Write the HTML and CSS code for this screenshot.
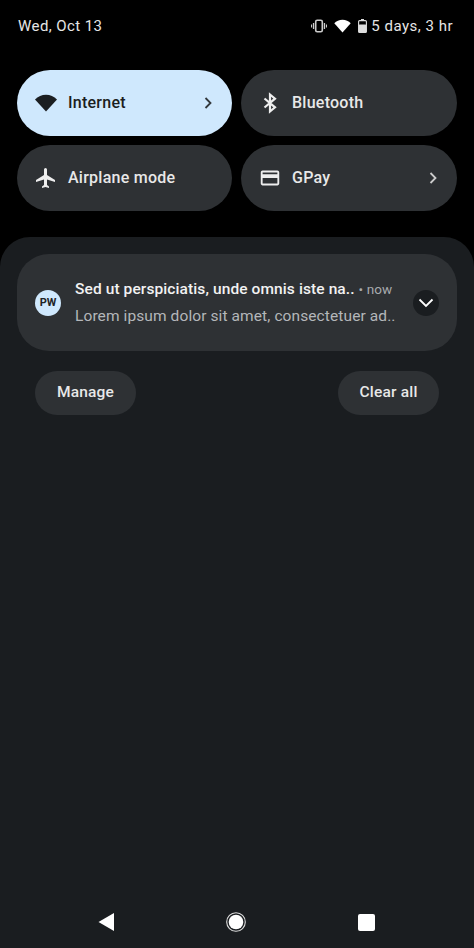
FILE: index.html
```html
<!DOCTYPE html>
<html lang="en">
<head>
    <meta charset="UTF-8">
    <meta name="viewport" content="width=device-width, initial-scale=1.0">
    <title>Notification shade</title>
    <link rel="stylesheet" href="styles.css">
</head>
<body>

    <div class="status-bar">
        <span class="status-date">Wed, Oct 13</span>
        <div class="status-right">
            <svg class="icon-vibrate" viewBox="0 0 16 14" width="16" height="14">
                <rect x="4.7" y="1.2" width="6.6" height="11.6" rx="1.5" fill="none" stroke="#ccc" stroke-width="1.6"/>
                <rect x="1.9" y="4" width="1.3" height="6" fill="#ccc"/>
                <rect x="12.8" y="4" width="1.3" height="6" fill="#ccc"/>
                <rect x="0" y="5.5" width="1.1" height="3" fill="#ccc"/>
                <rect x="14.9" y="5.5" width="1.1" height="3" fill="#ccc"/>
            </svg>
            <svg class="icon-wifi-small" viewBox="0 0 18 14" width="17" height="14">
                <path d="M9 14 L0.3 4 C2.5 1.7 5.5 0.3 9 0.3 C12.5 0.3 15.5 1.7 17.7 4 Z" fill="#fff"/>
            </svg>
            <svg class="icon-battery" viewBox="0 0 9 14" width="9" height="14">
                <rect x="3" y="0" width="3" height="2" fill="#ddd"/>
                <rect x="0.6" y="1.6" width="7.8" height="11.8" rx="1" fill="none" stroke="#ddd" stroke-width="1.1"/>
                <rect x="0.6" y="5.5" width="7.8" height="8" rx="1" fill="#ddd"/>
            </svg>
            <span class="status-text">5 days, 3 hr</span>
        </div>
    </div>

    <div class="tiles">
        <div class="tile active">
            <svg class="tile-icon" viewBox="0 0 24 24" width="24" height="24">
                <path d="M12 20.5 L1 8.5 C4 5.5 7.8 3.8 12 3.8 C16.2 3.8 20 5.5 23 8.5 Z" fill="#1b1e21"/>
            </svg>
            <span class="tile-label">Internet</span>
            <svg class="tile-chevron" viewBox="0 0 10 14" width="10" height="14">
                <path d="M2.5 2 L7.5 7 L2.5 12" fill="none" stroke="#33383c" stroke-width="1.8"/>
            </svg>
        </div>
        <div class="tile">
            <svg class="tile-icon" viewBox="0 0 24 24" width="24" height="24">
                <path d="M6.5 7.5 L17 16.3 L12 20.5 V3.5 L17 7.7 L6.5 16.5" fill="none" stroke="#eee" stroke-width="2.2"/>
            </svg>
            <span class="tile-label">Bluetooth</span>
        </div>
        <div class="tile">
            <svg class="tile-icon" viewBox="0 0 24 24" width="24" height="24">
                <path d="M21 16v-2l-8-5V3.5a1.5 1.5 0 0 0-3 0V9l-8 5v2l8-2.5V19l-2 1.5V22l3.5-1 3.5 1v-1.5L13 19v-5.5z" fill="#eee"/>
            </svg>
            <span class="tile-label">Airplane mode</span>
        </div>
        <div class="tile">
            <svg class="tile-icon" viewBox="-1 -1 26 26" width="24" height="24">
                <path d="M20 4H4c-1.1 0-2 .9-2 2v12c0 1.1.9 2 2 2h16c1.1 0 2-.9 2-2V6c0-1.1-.9-2-2-2zm0 14H4v-6h16v6zm0-10H4V6h16v2z" fill="#eee"/>
            </svg>
            <span class="tile-label">GPay</span>
            <svg class="tile-chevron" viewBox="0 0 10 14" width="10" height="14">
                <path d="M2.5 2 L7.5 7 L2.5 12" fill="none" stroke="#ccc" stroke-width="1.8"/>
            </svg>
        </div>
    </div>

    <div class="shade">
        <div class="notification">
            <div class="avatar">PW</div>
            <div class="notification-text">
                <div class="notification-title">
                    <strong>Sed ut perspiciatis, unde omnis iste na..</strong>
                    <span class="notification-time">• now</span>
                </div>
                <div class="notification-body">Lorem ipsum dolor sit amet, consectetuer ad..</div>
            </div>
            <div class="expand">
                <svg viewBox="0 0 16 10" width="16" height="10">
                    <path d="M1.5 1.5 L8 8 L14.5 1.5" fill="none" stroke="#fff" stroke-width="1.8"/>
                </svg>
            </div>
        </div>

        <div class="shade-actions">
            <button class="pill">Manage</button>
            <button class="pill">Clear all</button>
        </div>

        <div class="nav-bar">
            <svg viewBox="0 0 16 18" width="16" height="18">
                <path d="M16 0 V18 L0.5 9 Z" fill="#fff"/>
            </svg>
            <svg viewBox="0 0 20 20" width="20" height="20">
                <circle cx="10" cy="10" r="9.3" fill="none" stroke="#ddd" stroke-width="1.1"/>
                <circle cx="10" cy="10" r="7.3" fill="#fff"/>
            </svg>
            <div class="nav-square"></div>
        </div>
    </div>

</body>
</html>
```

FILE: styles.css
```css
body {
    font-family: 'Roboto', 'Liberation Sans', sans-serif;
    background-color: #000;
    color: #eee;
    margin: 0;
    height: 948px;
    display: flex;
    flex-direction: column;
    overflow: hidden;
}

.status-bar {
    display: flex;
    justify-content: space-between;
    align-items: center;
    height: 52px;
    padding: 0 21px 0 18px;
    font-size: 15px;
    letter-spacing: 0.42px;
    color: #e6e6e6;
}

.status-right {
    display: flex;
    align-items: center;
}

.status-text {
    letter-spacing: 0.5px;
}

.icon-vibrate {
    margin-right: 7px;
}

.icon-wifi-small {
    margin-right: 7px;
}

.icon-battery {
    margin-right: 4px;
}

.tiles {
    display: grid;
    grid-template-columns: 215px 216px;
    grid-auto-rows: 66px;
    gap: 9px;
    margin-top: 18px;
    padding: 0 17px;
}

.tile {
    display: flex;
    align-items: center;
    background-color: #2e3134;
    border-radius: 33px;
    padding: 0 19px 0 17px;
    color: #e8e8e8;
}

.tile.active {
    background-color: #cfe8fd;
    color: #1b1e21;
}

.tile-icon {
    flex: none;
    margin-right: 10px;
}

.tile-label {
    flex: 1;
    font-size: 16px;
    font-weight: 500;
    letter-spacing: 0.25px;
    padding-bottom: 2px;
}

.shade {
    flex: 1;
    display: flex;
    flex-direction: column;
    margin-top: 26px;
    padding: 17px 17px 0;
    background-color: #1a1d20;
    border-radius: 30px 30px 0 0;
}

.notification {
    display: flex;
    align-items: center;
    height: 97px;
    padding: 0 18px;
    background-color: #2e3134;
    border-radius: 32px;
}

.avatar {
    flex: none;
    width: 26px;
    height: 26px;
    border-radius: 50%;
    background-color: #cfe8fd;
    color: #1f2326;
    font-size: 11px;
    font-weight: 700;
    line-height: 26px;
    text-align: center;
    margin-right: 14px;
}

.notification-text {
    flex: 1;
    min-width: 0;
    white-space: nowrap;
    padding-bottom: 1px;
}

.notification-title {
    font-size: 15.5px;
    letter-spacing: 0.1px;
    line-height: 20px;
    margin-bottom: 7px;
}

.notification-title strong {
    font-weight: 500;
    color: #f2f2f2;
}

.notification-time {
    font-size: 13.5px;
    color: #a8abae;
}

.notification-body {
    font-size: 15.5px;
    letter-spacing: 0.1px;
    line-height: 20px;
    color: #b4b7ba;
}

.expand {
    flex: none;
    display: flex;
    align-items: center;
    justify-content: center;
    width: 26px;
    height: 26px;
    border-radius: 50%;
    background-color: #1a1d20;
}

.shade-actions {
    display: flex;
    justify-content: space-between;
    margin-top: 20px;
    padding: 0 18px;
}

.pill {
    width: 101px;
    height: 44px;
    padding: 0 0 2px;
    font-family: inherit;
    font-size: 15.5px;
    font-weight: 500;
    letter-spacing: 0.2px;
    color: #e8e8e8;
    border: none;
    border-radius: 22px;
    background-color: #2e3134;
}

.nav-bar {
    margin-top: auto;
    display: flex;
    justify-content: space-between;
    align-items: center;
    height: 52px;
    padding: 0 82px 0 81px;
}

.nav-square {
    width: 17px;
    height: 17px;
    border-radius: 2px;
    background-color: #fff;
}
```
